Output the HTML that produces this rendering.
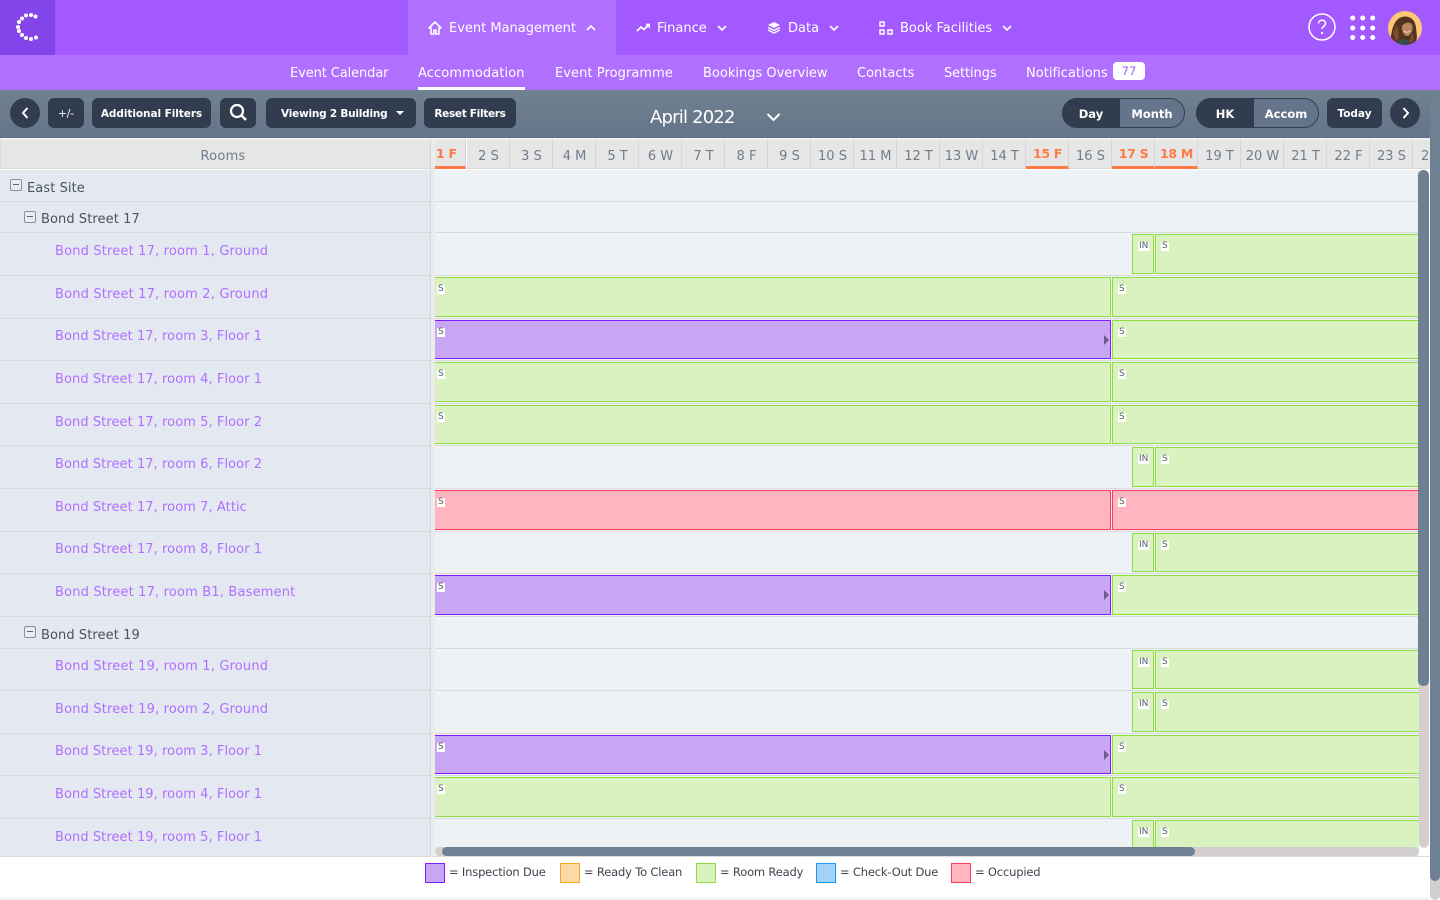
<!DOCTYPE html>
<html><head><meta charset="utf-8"><title>Accommodation</title>
<style>
html,body{margin:0;padding:0;width:1440px;height:900px;overflow:hidden;background:#fff;font-family:"DejaVu Sans","Liberation Sans",sans-serif}
div,span,svg{position:absolute;box-sizing:border-box}
.t{white-space:nowrap;color:#fff;font-size:13px;line-height:18px;height:18px}
.n{top:20px}
.s{top:65px}
.b{top:98px;height:30px;background:#313d4f;border-radius:6px;color:#fff;font-size:10.5px;font-weight:bold;line-height:32px;text-align:center;white-space:nowrap}
.h{top:138px;height:31px;background:#e6e6e6;border-right:1px solid #d6d6d6;border-top:2px solid #f0f0f0;border-bottom:1px solid #d8d8d8;color:#717d8a;font-size:13px;line-height:34px;text-align:center;text-indent:1px;width:43px;white-space:nowrap}
.o{color:#ff7a45;font-weight:bold;font-size:12.5px;letter-spacing:-.3px;line-height:27px;border-bottom:3px solid #ff7a45}
.l{left:0;width:430px;height:1px;background:#d8d8d8}
.g{left:435px;width:984px;height:1px;background:#d8dadd}
.m{left:55px;color:#b06fff;font-size:13px;letter-spacing:.17px;line-height:18px;white-space:nowrap}
.f{letter-spacing:.07px}
.q{color:#4a5361;font-size:13px;letter-spacing:.08px;line-height:18px;white-space:nowrap}
.x{width:12px;height:12px;border:1px solid #8b8f96;border-radius:2px;background:#e9edf3}
.x:after{content:"";position:absolute;left:2px;top:4px;width:6px;height:1px;background:#666}
.e{border:1px solid #8fdc43;background:#d9f2c0;overflow:hidden}
.a{left:435px;width:676px;border-left:0}
.c{left:1112px;width:307px;border-right:0}
.i{left:1132px;width:22px}
.d{left:1155px;width:264px;border-right:0}
.p{background:#c9a6f3;border-color:#7f1fff}
.r{background:#ffb6c1;border-color:#ff3b5c}
.w{background:#fff;color:#555f6e;font-size:9px;line-height:9px;height:9px;top:7px;left:5px;padding:0 1px;white-space:nowrap}
.a .w{left:2px}
.v{right:1px;top:50%;margin-top:-5px;width:0;height:0;border-left:5px solid #6b5a8e;border-top:5px solid transparent;border-bottom:5px solid transparent}
.k{top:863px;width:20px;height:20px;border:1px solid}
.u{top:864px;color:#3c4450;font-size:11.5px;letter-spacing:-.18px;line-height:16px;white-space:nowrap}
</style></head><body>

<!-- top nav -->
<div style="left:0;top:0;width:1440px;height:55px;background:#a259ff"></div>
<div style="left:0;top:0;width:55px;height:55px;background:#8344ea"></div>
<svg style="left:14px;top:11px" width="28" height="32" viewBox="0 0 28 32"><g fill="#fff"><circle cx="21.500" cy="5.500" r="2"/><circle cx="17" cy="4" r="2"/><circle cx="12" cy="4.500" r="2"/><circle cx="8" cy="7.500" r="2"/><circle cx="5" cy="11" r="2"/><circle cx="4" cy="16" r="2"/><circle cx="5" cy="20" r="2"/><circle cx="8" cy="24" r="2"/><circle cx="12" cy="27" r="2"/><circle cx="17" cy="28" r="2"/><circle cx="22" cy="26.500" r="2"/></g></svg>
<div style="left:408px;top:0;width:208px;height:55px;background:#b06fff"></div>

<svg style="left:428px;top:21px" width="14" height="14" viewBox="0 0 14 14"><path d="M7 1L1 7h2v6h3V9h2v4h3V7h2z" fill="none" stroke="#fff" stroke-width="1.6" stroke-linejoin="round"/></svg>
<div class="t n" style="left:449px">Event Management</div>
<svg style="left:586px;top:24px" width="10" height="8" viewBox="0 0 10 8"><path d="M1 6l4-4 4 4" fill="none" stroke="#fff" stroke-width="1.6"/></svg>

<svg style="left:636px;top:23px" width="14" height="10" viewBox="0 0 14 10"><path d="M1 8l4-4 3 2.500 5-5M10 1.500h3.500V5" fill="none" stroke="#fff" stroke-width="1.700"/></svg>
<div class="t n" style="left:657px">Finance</div>
<svg style="left:717px;top:24px" width="10" height="8" viewBox="0 0 10 8"><path d="M1 2l4 4 4-4" fill="none" stroke="#fff" stroke-width="1.6"/></svg>

<svg style="left:768px;top:21px" width="12" height="14" viewBox="0 0 12 14"><path d="M6 1l6 3-6 3-6-3z" fill="#fff"/><path d="M0 6.500l6 3 6-3M0 9l6 3 6-3" fill="none" stroke="#fff" stroke-width="1.300"/></svg>
<div class="t n" style="left:788px">Data</div>
<svg style="left:829px;top:24px" width="10" height="8" viewBox="0 0 10 8"><path d="M1 2l4 4 4-4" fill="none" stroke="#fff" stroke-width="1.6"/></svg>

<svg style="left:879px;top:21px" width="14" height="14" viewBox="0 0 14 14"><g fill="none" stroke="#fff" stroke-width="1.500"><rect x="1" y="1" width="4" height="4"/><rect x="1" y="9" width="4" height="4"/><rect x="9" y="9" width="4" height="4"/></g></svg>
<div class="t n" style="left:900px">Book Facilities</div>
<svg style="left:1002px;top:24px" width="10" height="8" viewBox="0 0 10 8"><path d="M1 2l4 4 4-4" fill="none" stroke="#fff" stroke-width="1.6"/></svg>

<svg style="left:1308px;top:13px" width="28" height="28" viewBox="0 0 28 28"><circle cx="14" cy="14" r="13" fill="none" stroke="#fff" stroke-width="1.500"/><path d="M10.500 10.500c0-2 1.600-3.300 3.500-3.300s3.500 1.300 3.500 3.200c0 2.800-3.500 2.800-3.500 5.600" fill="none" stroke="#fff" stroke-width="1.500"/><circle cx="14" cy="20" r="1.100" fill="#fff"/></svg>
<svg style="left:1348px;top:13px" width="30" height="30" viewBox="0 0 30 30"><g fill="#fff"><circle cx="4.700" cy="5" r="2.500"/><circle cx="14.700" cy="5" r="2.500"/><circle cx="24.700" cy="5" r="2.500"/><circle cx="4.700" cy="15" r="2.500"/><circle cx="14.700" cy="15" r="2.500"/><circle cx="24.700" cy="15" r="2.500"/><circle cx="4.700" cy="24.500" r="2.500"/><circle cx="14.700" cy="24.500" r="2.500"/><circle cx="24.700" cy="24.500" r="2.500"/></g></svg>
<svg style="left:1388px;top:11px" width="34" height="34" viewBox="0 0 34 34"><defs><clipPath id="av"><circle cx="17" cy="17" r="17"/></clipPath></defs><g clip-path="url(#av)"><rect width="34" height="34" fill="#fdc873"/><path d="M3 34C2 24 5 13 9 9c4-4 11-5 15-1 5 4 4 12 5 17l-1 9z" fill="#54331f"/><path d="M14 15c2-3 6-4 8-3 3 1 3 5 2 8-1 3-3 5-5 5-3 0-6-6-5-10z" fill="#b98660"/><path d="M5 22c1-4 3-6 5-7l1 12-3 4z" fill="#7a4c2c"/><path d="M24 22c2 2 2 6 1 9l-4 0z" fill="#7a4c2c"/><path d="M8 34c1-4 4-6 7-6l5 1 3 5z" fill="#3b4b50"/><path d="M16 20q3 2.500 6 0" fill="none" stroke="#ecd3bf" stroke-width="1.200"/></g></svg>

<!-- sub nav -->
<div style="left:0;top:55px;width:1440px;height:35px;background:#b06fff"></div>
<div class="t s" style="left:290px;letter-spacing:-.1px">Event Calendar</div>
<div class="t s" style="left:418px;letter-spacing:.1px">Accommodation</div>
<div style="left:418px;top:87px;width:107px;height:3px;background:#fff"></div>
<div class="t s" style="left:555px;letter-spacing:.07px">Event Programme</div>
<div class="t s" style="left:703px">Bookings Overview</div>
<div class="t s" style="left:857px;letter-spacing:0">Contacts</div>
<div class="t s" style="left:944px;letter-spacing:-.1px">Settings</div>
<div class="t s" style="left:1026px;letter-spacing:.03px">Notifications</div>
<div style="left:1113px;top:62px;width:32px;height:18px;background:#fff;border-radius:4px;color:#a259ff;font-size:11.500px;line-height:19px;text-align:center">77</div>

<!-- toolbar -->
<div style="left:0;top:90px;width:1430px;height:48px;background:linear-gradient(#70828f,#64748a)"></div>
<div class="b" style="left:10px;width:30px;border-radius:15px"></div>
<svg style="left:20px;top:106px" width="10" height="14" viewBox="0 0 10 14"><path d="M7.500 2L3 7l4.500 5" fill="none" stroke="#fff" stroke-width="2"/></svg>
<div class="b" style="left:48px;width:36px;font-weight:normal">+/-</div>
<div class="b" style="left:92px;width:119px;letter-spacing:-.06px">Additional Filters</div>
<div class="b" style="left:220px;width:36px"></div>
<svg style="left:229px;top:103px" width="19" height="19" viewBox="0 0 19 19"><circle cx="8" cy="8" r="6" fill="none" stroke="#fff" stroke-width="2.200"/><path d="M12.500 12.500L17 17" stroke="#fff" stroke-width="2.400"/></svg>
<div class="b" style="left:266px;width:150px;text-align:left;padding-left:15px;letter-spacing:-.22px">Viewing 2 Building</div>
<div style="left:396px;top:111px;width:0;height:0;border-left:4px solid transparent;border-right:4px solid transparent;border-top:4px solid #fff"></div>
<div class="b" style="left:424px;width:92px;letter-spacing:-.3px">Reset Filters</div>
<div class="t" style="left:650px;top:106px;font-size:18px;line-height:24px;height:24px;letter-spacing:-.8px">April 2022</div>
<svg style="left:766px;top:112px" width="15" height="10" viewBox="0 0 15 10"><path d="M1.500 2l6 6 6-6" fill="none" stroke="#fff" stroke-width="2"/></svg>

<div style="left:1062px;top:98px;width:123px;height:30px;border:1px solid #313d4f;border-radius:15px;background:#64748a"></div>
<div class="b" style="left:1062px;width:58px;border-radius:15px 0 0 15px;font-size:11.500px">Day</div>
<div class="t" style="left:1120px;top:105px;width:64px;text-align:center;font-size:11.500px;font-weight:bold">Month</div>
<div style="left:1196px;top:98px;width:123px;height:30px;border:1px solid #313d4f;border-radius:15px;background:#64748a"></div>
<div class="b" style="left:1196px;width:58px;border-radius:15px 0 0 15px;font-size:11.500px">HK</div>
<div class="t" style="left:1254px;top:105px;width:64px;text-align:center;font-size:11.500px;font-weight:bold">Accom</div>
<div class="b" style="left:1327px;width:55px">Today</div>
<div class="b" style="left:1390px;width:30px;border-radius:15px"></div>
<svg style="left:1401px;top:106px" width="10" height="14" viewBox="0 0 10 14"><path d="M2.500 2L7 7l-4.500 5" fill="none" stroke="#fff" stroke-width="2"/></svg>

<!-- grid backgrounds -->
<div style="left:0;top:170px;width:430px;height:687px;background:#e4e9f1"></div>
<div style="left:430px;top:138px;width:5px;height:719px;background:#ececec;border-left:1px solid #d8d8d8"></div>
<div style="left:435px;top:170px;width:984px;height:687px;background:#eef2f5"></div>

<!-- header -->
<div class="h" style="left:0;width:431px;border-left:1px solid #dcdcdc;padding-left:14px;letter-spacing:.25px">Rooms</div>
<div class="h" style="left:431px;width:4px;background:#ececec;border-right:0"></div>
<div class="h o" style="left:435px;width:31px;text-align:left;text-indent:0;border-right:1px solid #d6d6d6;padding-left:1px">1 F</div>
<div class="h" style="left:467px">2 S</div>
<div class="h" style="left:510px">3 S</div>
<div class="h" style="left:553px">4 M</div>
<div class="h" style="left:596px">5 T</div>
<div class="h" style="left:639px">6 W</div>
<div class="h" style="left:682px">7 T</div>
<div class="h" style="left:725px">8 F</div>
<div class="h" style="left:768px">9 S</div>
<div class="h" style="left:811px">10 S</div>
<div class="h" style="left:854px">11 M</div>
<div class="h" style="left:897px">12 T</div>
<div class="h" style="left:940px">13 W</div>
<div class="h" style="left:983px">14 T</div>
<div class="h o" style="left:1026px">15 F</div>
<div class="h" style="left:1069px">16 S</div>
<div class="h o" style="left:1112px">17 S</div>
<div class="h o" style="left:1155px">18 M</div>
<div class="h" style="left:1198px">19 T</div>
<div class="h" style="left:1241px">20 W</div>
<div class="h" style="left:1284px">21 T</div>
<div class="h" style="left:1327px">22 F</div>
<div class="h" style="left:1370px">23 S</div>
<div class="h" style="left:1413px;width:17px;overflow:hidden;border-right:0;text-align:left;padding-left:8px;text-indent:0">2</div>

<!-- row lines -->
<div class="l" style="top:201px"></div><div class="g" style="top:201px"></div>
<div class="l" style="top:232px"></div><div class="g" style="top:232px"></div>
<div class="l" style="top:275px"></div><div class="g" style="top:275px"></div>
<div class="l" style="top:318px"></div><div class="g" style="top:318px"></div>
<div class="l" style="top:360px"></div><div class="g" style="top:360px"></div>
<div class="l" style="top:403px"></div><div class="g" style="top:403px"></div>
<div class="l" style="top:445px"></div><div class="g" style="top:445px"></div>
<div class="l" style="top:488px"></div><div class="g" style="top:488px"></div>
<div class="l" style="top:531px"></div><div class="g" style="top:531px"></div>
<div class="l" style="top:573px"></div><div class="g" style="top:573px"></div>
<div class="l" style="top:616px"></div><div class="g" style="top:616px"></div>
<div class="l" style="top:648px"></div><div class="g" style="top:648px"></div>
<div class="l" style="top:690px"></div><div class="g" style="top:690px"></div>
<div class="l" style="top:733px"></div><div class="g" style="top:733px"></div>
<div class="l" style="top:775px"></div><div class="g" style="top:775px"></div>
<div class="l" style="top:818px"></div><div class="g" style="top:818px"></div>

<!-- left labels -->
<div class="x" style="left:10px;top:179px"></div><div class="q" style="left:27px;top:180px">East Site</div>
<div class="x" style="left:24px;top:211px"></div><div class="q" style="left:41px;top:211px">Bond Street 17</div>
<div class="m" style="top:243px">Bond Street 17, room 1, Ground</div>
<div class="m" style="top:286px">Bond Street 17, room 2, Ground</div>
<div class="m f" style="top:328px">Bond Street 17, room 3, Floor 1</div>
<div class="m f" style="top:371px">Bond Street 17, room 4, Floor 1</div>
<div class="m f" style="top:414px">Bond Street 17, room 5, Floor 2</div>
<div class="m f" style="top:456px">Bond Street 17, room 6, Floor 2</div>
<div class="m f" style="top:499px">Bond Street 17, room 7, Attic</div>
<div class="m f" style="top:541px">Bond Street 17, room 8, Floor 1</div>
<div class="m" style="top:584px">Bond Street 17, room B1, Basement</div>
<div class="x" style="left:24px;top:626px"></div><div class="q" style="left:41px;top:627px">Bond Street 19</div>
<div class="m" style="top:658px">Bond Street 19, room 1, Ground</div>
<div class="m" style="top:701px">Bond Street 19, room 2, Ground</div>
<div class="m f" style="top:743px">Bond Street 19, room 3, Floor 1</div>
<div class="m f" style="top:786px">Bond Street 19, room 4, Floor 1</div>
<div class="m f" style="top:829px">Bond Street 19, room 5, Floor 1</div>

<!-- events -->
<div class="e i" style="top:234px;height:40px"><span class="w">IN</span></div><div class="e d" style="top:234px;height:40px"><span class="w">S</span></div>
<div class="e a" style="top:277px;height:40px"><span class="w">S</span></div><div class="e c" style="top:277px;height:40px"><span class="w">S</span></div>
<div class="e a p" style="top:320px;height:39px"><span class="w">S</span><span class="v"></span></div><div class="e c" style="top:320px;height:39px"><span class="w">S</span></div>
<div class="e a" style="top:362px;height:40px"><span class="w">S</span></div><div class="e c" style="top:362px;height:40px"><span class="w">S</span></div>
<div class="e a" style="top:405px;height:39px"><span class="w">S</span></div><div class="e c" style="top:405px;height:39px"><span class="w">S</span></div>
<div class="e i" style="top:447px;height:40px"><span class="w">IN</span></div><div class="e d" style="top:447px;height:40px"><span class="w">S</span></div>
<div class="e a r" style="top:490px;height:40px"><span class="w">S</span></div><div class="e c r" style="top:490px;height:40px"><span class="w">S</span></div>
<div class="e i" style="top:533px;height:39px"><span class="w">IN</span></div><div class="e d" style="top:533px;height:39px"><span class="w">S</span></div>
<div class="e a p" style="top:575px;height:40px"><span class="w">S</span><span class="v"></span></div><div class="e c" style="top:575px;height:40px"><span class="w">S</span></div>
<div class="e i" style="top:650px;height:39px"><span class="w">IN</span></div><div class="e d" style="top:650px;height:39px"><span class="w">S</span></div>
<div class="e i" style="top:692px;height:40px"><span class="w">IN</span></div><div class="e d" style="top:692px;height:40px"><span class="w">S</span></div>
<div class="e a p" style="top:735px;height:39px"><span class="w">S</span><span class="v"></span></div><div class="e c" style="top:735px;height:39px"><span class="w">S</span></div>
<div class="e a" style="top:777px;height:40px"><span class="w">S</span></div><div class="e c" style="top:777px;height:40px"><span class="w">S</span></div>
<div class="e i" style="top:820px;height:30px"><span class="w">IN</span></div><div class="e d" style="top:820px;height:30px"><span class="w">S</span></div>

<!-- inner scrollbars -->
<div style="left:1419px;top:170px;width:11px;height:687px;background:#fff"></div>
<div style="left:1419px;top:170px;width:10px;height:678px;background:#d3cfcf;border-radius:5px"></div>
<div style="left:1418px;top:170px;width:11px;height:516px;background:#6e8192;border-radius:5px"></div>
<div style="left:435px;top:847px;width:984px;height:9px;background:#d3cfcf;border-radius:5px"></div>
<div style="left:442px;top:847px;width:753px;height:9px;background:#6e8192;border-radius:5px"></div>
<div style="left:0;top:856px;width:1430px;height:1px;background:#dcdcdc"></div>

<!-- legend -->
<div style="left:0;top:857px;width:1430px;height:41px;background:#fff"></div>
<div style="left:0;top:898px;width:1430px;height:2px;background:#eef2f5"></div>
<div class="k" style="left:425px;background:#c9a6f3;border-color:#7f1fff"></div><div class="u" style="left:449px">= Inspection Due</div>
<div class="k" style="left:560px;background:#fdd9a5;border-color:#f9a825"></div><div class="u" style="left:584px">= Ready To Clean</div>
<div class="k" style="left:696px;background:#d9f2c0;border-color:#8fdc43"></div><div class="u" style="left:720px">= Room Ready</div>
<div class="k" style="left:816px;background:#a4d3f8;border-color:#2196f3"></div><div class="u" style="left:840px">= Check-Out Due</div>
<div class="k" style="left:951px;background:#ffb6c1;border-color:#ff3b5c"></div><div class="u" style="left:975px">= Occupied</div>

<!-- page scrollbar -->
<div style="left:1430px;top:90px;width:10px;height:810px;background:#d3cfcf;border-radius:5px"></div>
<div style="left:1430px;top:90px;width:10px;height:791px;background:#6e8192;border-radius:0 0 5px 5px"></div>
</body></html>
